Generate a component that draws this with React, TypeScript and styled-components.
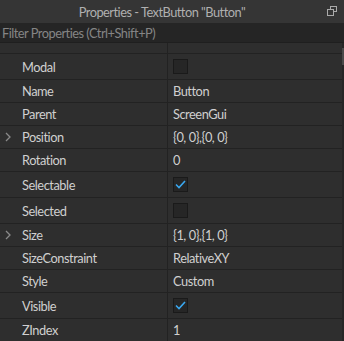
import React from 'react';
import styled, { createGlobalStyle } from 'styled-components';

const GlobalStyle = createGlobalStyle`
  html, body {
    margin: 0;
    padding: 0;
    background: #2e2e2e;
  }
  body {
    font-family: Lato, "Open Sans", sans-serif;
  }
`;

const Panel = styled.div`
  width: 344px;
  height: 341px;
  overflow: hidden;
  display: flex;
  flex-direction: column;
  background: #2e2e2e;
`;

const TitleBar = styled.div`
  height: 23px;
  flex: none;
  background: #353535;
  display: flex;
  align-items: center;
  justify-content: center;
  padding-right: 20px;
  position: relative;
  color: #b0b0b0;
  font-size: 12.8px;
  letter-spacing: -0.5px;
`;

const DockIcon = styled.svg`
  position: absolute;
  right: 7px;
  top: 6px;
`;

const FilterBar = styled.div`
  height: 19px;
  flex: none;
  background: #252525;
  border-bottom: 1px solid #1f1f1f;
  display: flex;
  align-items: center;
  padding-left: 2px;
  color: #858585;
  font-size: 12.8px;
  letter-spacing: -0.5px;
`;

const Body = styled.div`
  flex: 1;
  display: flex;
`;

const Table = styled.div`
  flex: 1;
  display: grid;
  grid-template-columns: 168px 1fr;
  grid-auto-rows: auto;
`;

const Scrollbar = styled.div`
  width: 2px;
  flex: none;
  background: #262626;
  display: flex;
  flex-direction: column;
  padding-top: 5px;
`;

const Thumb = styled.div`
  height: 17px;
  background: #4a4a4a;
`;

const Cell = styled.div<{ $tall?: boolean; $value?: boolean }>`
  height: ${(p) => (p.$tall ? 25 : 22)}px;
  border-bottom: 1px solid #222222;
  border-right: ${(p) => (p.$value ? 'none' : '1px solid #222222')};
  display: flex;
  align-items: center;
  padding-left: ${(p) => (p.$value ? 5 : 22)}px;
  color: #d0d0d0;
  font-size: 12.8px;
  letter-spacing: -0.45px;
  position: relative;
  box-sizing: content-box;
`;

const HeaderCell = styled(Cell)`
  height: 10px;
`;

const Chevron = styled.svg`
  position: absolute;
  left: 5px;
  top: 50%;
  margin-top: -5px;
`;

const Checkbox = styled.div`
  width: 13px;
  height: 13px;
  background: #262626;
  border: 1px solid #1a1a1a;
  display: flex;
  align-items: center;
  justify-content: center;
`;

type Prop = {
  name: string;
  value?: string;
  check?: boolean;
  expand?: boolean;
};

const props: Prop[] = [
  { name: 'Modal', check: false },
  { name: 'Name', value: 'Button' },
  { name: 'Parent', value: 'ScreenGui' },
  { name: 'Position', value: '{0, 0},{0, 0}', expand: true },
  { name: 'Rotation', value: '0' },
  { name: 'Selectable', check: true },
  { name: 'Selected', check: false },
  { name: 'Size', value: '{1, 0},{1, 0}', expand: true },
  { name: 'SizeConstraint', value: 'RelativeXY' },
  { name: 'Style', value: 'Custom' },
  { name: 'Visible', check: true },
  { name: 'ZIndex', value: '1' },
];

function Check({ on }: { on: boolean }) {
  return (
    <Checkbox>
      {on && (
        <svg width="11" height="9" viewBox="0 0 11 9">
          <path d="M1 4.5 L4 7.5 L10 1" stroke="#3aa8f0" strokeWidth="1.6" fill="none" />
        </svg>
      )}
    </Checkbox>
  );
}

export default function App() {
  return (
    <Panel>
      <GlobalStyle />
      <TitleBar>
        Properties - TextButton "Button"
        <DockIcon width="10" height="10" viewBox="0 0 10 10">
          <rect x="3.5" y="0.5" width="6" height="5" fill="none" stroke="#aaaaaa" />
          <rect x="0.5" y="3.5" width="6" height="6" fill="#353535" stroke="#aaaaaa" />
        </DockIcon>
      </TitleBar>
      <FilterBar>Filter Properties (Ctrl+Shift+P)</FilterBar>
      <Body>
        <Table>
          <HeaderCell />
          <HeaderCell $value />
          {props.map((p) => {
            const tall = p.check !== undefined;
            return (
              <React.Fragment key={p.name}>
                <Cell $tall={tall}>
                  {p.expand && (
                    <Chevron width="6" height="10" viewBox="0 0 6 10">
                      <path d="M1 1 L5 5 L1 9" stroke="#8a8a8a" strokeWidth="1.3" fill="none" />
                    </Chevron>
                  )}
                  {p.name}
                </Cell>
                <Cell $tall={tall} $value>
                  {tall ? <Check on={!!p.check} /> : p.value}
                </Cell>
              </React.Fragment>
            );
          })}
        </Table>
        <Scrollbar>
          <Thumb />
        </Scrollbar>
      </Body>
    </Panel>
  );
}
